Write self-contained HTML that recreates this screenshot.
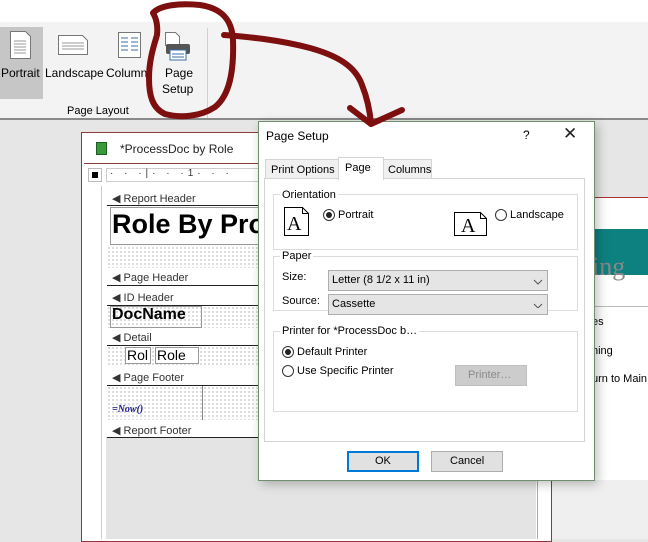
<!DOCTYPE html>
<html><head><meta charset="utf-8"><style>
*{margin:0;padding:0;box-sizing:border-box}
body{width:648px;height:539px;overflow:hidden;position:relative;background:#e6e6e6;font-family:"Liberation Sans",sans-serif;font-size:11px;color:#000}
.a{position:absolute}
.t{position:absolute;white-space:nowrap}
</style></head><body>
<div class="a" style="left:0;top:0;width:648px;height:22px;background:#fff"></div>
<div class="a" style="left:0;top:22px;width:648px;height:98px;background:#f3f3f3"></div>
<div class="a" style="left:0;top:118px;width:648px;height:2px;background:#8a8a8a"></div>
<div class="a" style="left:0;top:27px;width:43px;height:72px;background:#c6c6c6"></div>
<svg class="a" style="left:0;top:28px" width="210" height="35">
<g fill="#fff" stroke="#777" stroke-width="1">
<path d="M10.5 3.5h15l5 5v22h-20z"/>
<path d="M58.5 7.5h24l5 5v14h-29z"/>
<path d="M118.5 4.5h22v25h-22z"/>
<path d="M165.5 4.5h10l4 4v9h-14z"/>
</g>
<g stroke="#999"><path d="M14 13h12M14 16h12M14 19h12M14 22h12M14 25h12M62 15h22M62 18h22M62 21h22"/></g>
<g stroke="#3b6ea8"><path d="M121 10h7M131 10h7M121 14h7M131 14h7M121 18h7M131 18h7M121 22h7M131 22h7"/></g>
<rect x="166" y="16" width="24" height="10" rx="2" fill="#555"/><rect x="170" y="22" width="16" height="10" fill="#fff" stroke="#3b6ea8"/><path d="M172 26h12M172 29h12" stroke="#3b6ea8"/>
</svg>
<div class="t" style="left:1px;top:66px;font-size:12px">Portrait</div>
<div class="t" style="left:45px;top:66px;font-size:12px">Landscape</div>
<div class="t" style="left:106px;top:66px;font-size:12px">Column</div>
<div class="t" style="left:165px;top:66px;font-size:12px">Page</div>
<div class="t" style="left:162px;top:82px;font-size:12px">Setup</div>
<div class="a" style="left:207px;top:28px;width:1px;height:90px;background:#d0d0d0"></div>
<div class="t" style="left:67px;top:105px;font-size:11px">Page Layout</div>
<!-- right form -->
<div class="a" style="left:595px;top:197px;width:53px;height:283px;background:#fff"></div>
<div class="a" style="left:595px;top:197px;width:53px;height:1px;background:#b03030"></div>
<div class="a" style="left:595px;top:229px;width:53px;height:46px;background:#0d8080"></div>
<div class="t" style="left:592px;top:252px;font-family:'Liberation Serif',serif;font-size:26px;color:#888">ing</div>
<div class="a" style="left:595px;top:306px;width:53px;height:1px;background:#bbb"></div>
<div class="t" style="left:592px;top:316px;font-size:11px">es</div>
<div class="t" style="left:592px;top:345px;font-size:11px">ning</div>
<div class="t" style="left:592px;top:373px;font-size:11px">urn to Main</div>
<div class="a" style="left:552px;top:480px;width:96px;height:59px;background:#efefef"></div>
<!-- report window -->
<div class="a" style="left:81px;top:132px;width:471px;height:410px;background:#fff;border:1px solid #8b3a3a"></div>
<div class="a" style="left:537px;top:180px;width:1px;height:359px;background:#aaa"></div>
<div class="a" style="left:96px;top:142px;width:11px;height:13px;background:#3a9a3a;border:1px solid #1e5e1e"></div>
<div class="t" style="left:120px;top:142px;font-size:12px;color:#222">*ProcessDoc by Role</div>
<div class="a" style="left:84px;top:163px;width:466px;height:1px;background:#8b3a3a"></div>
<div class="a" style="left:88px;top:168px;width:14px;height:14px;background:#fff;border:1px solid #bbb"></div>
<div class="a" style="left:92px;top:172px;width:6px;height:6px;background:#000"></div>
<div class="a" style="left:106px;top:168px;width:440px;height:14px;border:1px solid #ccc;background:#fff"></div>
<div class="t" style="left:110px;top:168px;font-size:10px;letter-spacing:4px;color:#333">·&nbsp;·&nbsp;·|·&nbsp;·&nbsp;·1·&nbsp;·&nbsp;·</div>
<div class="a" style="left:88px;top:186px;width:14px;height:353px;background:#fff;border-right:1px solid #ccc"></div>
<div class="a" style="left:106px;top:437px;width:430px;height:102px;background:#e4e4e4"></div>
<div class="a" style="left:107px;top:188px;width:153px;height:250px;background:#fff"></div>
<div class="t" style="left:112px;top:192px;color:#333">◀ Report Header</div>
<div class="a" style="left:107px;top:205px;width:153px;height:1px;background:#222"></div>
<div class="a" style="left:110px;top:207px;width:150px;height:38px;border:1px solid #999"></div>
<div class="t" style="left:112px;top:209px;font-size:27px;font-weight:bold">Role By Pro</div>
<div class="a" style="left:107px;top:246px;width:153px;height:22px;background-image:radial-gradient(#777 0.6px,transparent 0.7px);background-size:4px 4px"></div>
<div class="t" style="left:112px;top:271px;color:#333">◀ Page Header</div>
<div class="a" style="left:107px;top:285px;width:153px;height:1px;background:#222"></div>
<div class="t" style="left:112px;top:291px;color:#333">◀ ID Header</div>
<div class="a" style="left:107px;top:305px;width:153px;height:1px;background:#222"></div>
<div class="a" style="left:107px;top:306px;width:153px;height:22px;background-image:radial-gradient(#777 0.6px,transparent 0.7px);background-size:4px 4px"></div>
<div class="a" style="left:110px;top:306px;width:92px;height:22px;border:1px solid #999"></div>
<div class="t" style="left:112px;top:306px;font-size:16px;font-weight:bold">DocName</div>
<div class="t" style="left:112px;top:331px;color:#333">◀ Detail</div>
<div class="a" style="left:107px;top:345px;width:153px;height:1px;background:#222"></div>
<div class="a" style="left:107px;top:346px;width:153px;height:20px;background-image:radial-gradient(#777 0.6px,transparent 0.7px);background-size:4px 4px"></div>
<div class="a" style="left:125px;top:347px;width:26px;height:17px;border:1px solid #999;background:#fff"></div>
<div class="a" style="left:155px;top:347px;width:44px;height:17px;border:1px solid #999;background:#fff"></div>
<div class="t" style="left:127px;top:347px;font-size:14px">Rol</div>
<div class="t" style="left:157px;top:347px;font-size:14px">Role</div>
<div class="t" style="left:112px;top:371px;color:#333">◀ Page Footer</div>
<div class="a" style="left:107px;top:385px;width:153px;height:1px;background:#222"></div>
<div class="a" style="left:107px;top:386px;width:153px;height:34px;background-image:radial-gradient(#777 0.6px,transparent 0.7px);background-size:4px 4px"></div>
<div class="a" style="left:202px;top:386px;width:1px;height:34px;background:#888"></div>
<div class="t" style="left:112px;top:404px;font-family:'Liberation Serif',serif;font-style:italic;font-weight:bold;color:#1a1a8a;font-size:10px">=Now()</div>
<div class="t" style="left:112px;top:424px;color:#333">◀ Report Footer</div>
<div class="a" style="left:107px;top:437px;width:153px;height:1px;background:#222"></div>
<!-- dialog -->
<div class="a" style="left:258px;top:121px;width:337px;height:360px;background:#fff;border:1px solid #6f8f6f;box-shadow:3px 3px 10px rgba(0,0,0,.25)"></div>
<div class="t" style="left:266px;top:129px;font-size:12px">Page Setup</div>
<div class="t" style="left:523px;top:128px;font-size:12px">?</div>
<div class="t" style="left:563px;top:124px;font-size:17px;color:#222">✕</div>
<div class="a" style="left:264px;top:178px;width:321px;height:264px;border:1px solid #d4d4d4"></div>
<div class="a" style="left:265px;top:159px;width:74px;height:20px;background:#f0f0f0;border:1px solid #d4d4d4"></div>
<div class="t" style="left:271px;top:164px">Print Options</div>
<div class="a" style="left:383px;top:159px;width:49px;height:20px;background:#f0f0f0;border:1px solid #d4d4d4"></div>
<div class="t" style="left:388px;top:164px">Columns</div>
<div class="a" style="left:338px;top:157px;width:46px;height:23px;background:#fff;border:1px solid #d4d4d4;border-bottom:none"></div>
<div class="t" style="left:345px;top:162px">Page</div>
<div class="a" style="left:273px;top:194px;width:305px;height:56px;border:1px solid #dcdcdc"></div>
<div class="t" style="left:280px;top:189px;background:#fff;padding:0 2px">Orientation</div>
<svg class="a" style="left:284px;top:207px" width="30" height="30"><path d="M.5 .5h18l6 6v22H.5z" fill="#fff" stroke="#000"/><path d="M18.5 .5v6h6" fill="none" stroke="#000"/><text x="3" y="23" font-family="Liberation Serif" font-size="20">A</text></svg>
<svg class="a" style="left:454px;top:212px" width="34" height="25"><path d="M.5 .5h26l6 6v17H.5z" fill="#fff" stroke="#000"/><path d="M26.5 .5v6h6" fill="none" stroke="#000"/><text x="7" y="20" font-family="Liberation Serif" font-size="20">A</text></svg>
<div class="a" style="left:323px;top:209px;width:12px;height:12px;border:1px solid #333;border-radius:50%"></div>
<div class="a" style="left:326px;top:212px;width:6px;height:6px;background:#222;border-radius:50%"></div>
<div class="t" style="left:338px;top:209px">Portrait</div>
<div class="a" style="left:495px;top:209px;width:12px;height:12px;border:1px solid #333;border-radius:50%"></div>
<div class="t" style="left:510px;top:209px">Landscape</div>
<div class="a" style="left:273px;top:256px;width:305px;height:55px;border:1px solid #dcdcdc"></div>
<div class="t" style="left:280px;top:250px;background:#fff;padding:0 2px">Paper</div>
<div class="t" style="left:282px;top:271px">Size:</div>
<div class="t" style="left:282px;top:295px">Source:</div>
<div class="a" style="left:328px;top:270px;width:220px;height:21px;background:#e5e5e5;border:1px solid #adadad"></div>
<div class="t" style="left:332px;top:274px">Letter (8 1/2 x 11 in)</div>
<div class="a" style="left:328px;top:294px;width:220px;height:21px;background:#e5e5e5;border:1px solid #adadad"></div>
<div class="t" style="left:332px;top:298px">Cassette</div>
<svg class="a" style="left:533px;top:278px" width="10" height="30"><path d="M1 2l4 4 4-4M1 26l4 4 4-4" fill="none" stroke="#555"/></svg>
<div class="a" style="left:273px;top:331px;width:305px;height:81px;border:1px solid #dcdcdc"></div>
<div class="t" style="left:280px;top:325px;background:#fff;padding:0 2px">Printer for *ProcessDoc b…</div>
<div class="a" style="left:282px;top:346px;width:12px;height:12px;border:1px solid #333;border-radius:50%"></div>
<div class="a" style="left:285px;top:349px;width:6px;height:6px;background:#222;border-radius:50%"></div>
<div class="t" style="left:297px;top:346px">Default Printer</div>
<div class="a" style="left:282px;top:365px;width:12px;height:12px;border:1px solid #333;border-radius:50%"></div>
<div class="t" style="left:297px;top:365px">Use Specific Printer</div>
<div class="a" style="left:455px;top:365px;width:72px;height:21px;background:#ccc;border:1px solid #bfbfbf"></div>
<div class="t" style="left:468px;top:369px;color:#8a8a8a">Printer…</div>
<div class="a" style="left:347px;top:451px;width:72px;height:21px;background:#e1e1e1;border:2px solid #0078d7"></div>
<div class="t" style="left:375px;top:455px">OK</div>
<div class="a" style="left:431px;top:451px;width:72px;height:21px;background:#e1e1e1;border:1px solid #adadad"></div>
<div class="t" style="left:450px;top:455px">Cancel</div>
<!-- annotation -->
<svg class="a" style="left:0;top:0" width="648" height="539">
<g fill="none" stroke="#7d0f0f" stroke-width="6" stroke-linecap="round" stroke-linejoin="round">
<path d="M153 13C160 5 180 3 200 5C220 8 232 18 233 40C234 70 230 95 215 107C200 117 180 118 165 114C152 108 149 95 149 78C149 60 154 45 157 35C158 25 156 18 153 13"/>
<path d="M224 35C250 37 280 40 310 48C335 55 355 65 362 85C368 100 370 112 371 124"/>
<path d="M350 108L371 124L402 110"/>
</g>
</svg>
</body></html>
